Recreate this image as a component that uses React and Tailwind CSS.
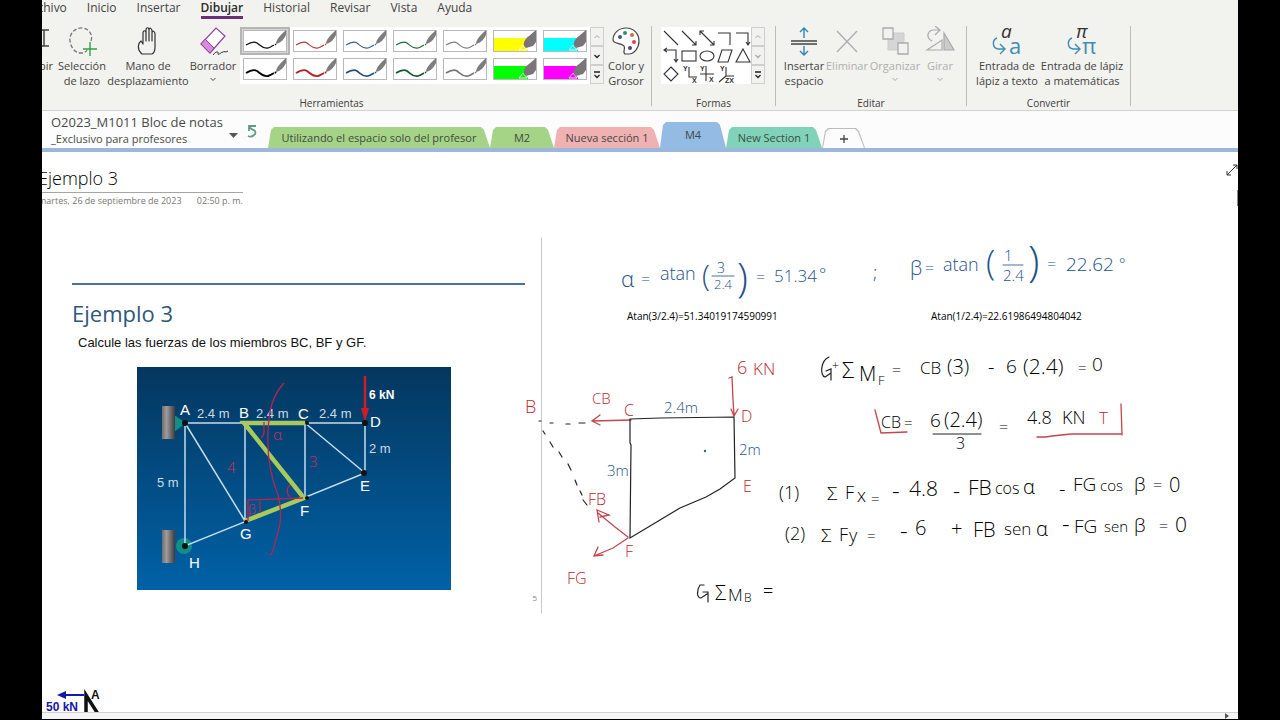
import React from "react";

const menu = ["Archivo", "Inicio", "Insertar", "Dibujar", "Historial", "Revisar", "Vista", "Ayuda"];

const penRows = [
  [
    { c: "#111111", w: 1.3, on: true },
    { c: "#b8343c", w: 1.1 },
    { c: "#3f5f86", w: 1.1 },
    { c: "#1d6b33", w: 1.1 },
    { c: "#7d7d7d", w: 1.1 },
    { c: "#ffff00", hl: true },
    { c: "#00ffff", hl: true },
  ],
  [
    { c: "#000000", w: 1.9 },
    { c: "#b81f28", w: 1.9 },
    { c: "#234f86", w: 1.6 },
    { c: "#0f5a2b", w: 1.6 },
    { c: "#777777", w: 1.6 },
    { c: "#00ff00", hl: true },
    { c: "#ff00ff", hl: true },
  ],
];

function Pen({ c, w, on, hl }) {
  return (
    <button
      aria-label={hl ? "Resaltador" : "Lápiz"}
      className={
        on
          ? "h-7 w-[50px] border-2 border-[#b5b5b5] bg-[#d6d6d6] p-px"
          : "h-7 w-[50px] p-[3px]"
      }
    >
      <svg viewBox="0 0 44 22" className="block h-[22px] w-11">
        <rect x="0.5" y="0.5" width="43" height="21" fill="#fff" stroke="#b9b9bd" />
        {hl ? (
          <>
            <path d="M1 8H34L31 15L35 20V21H1Z" fill={c} />
            <path d="M26 20L30 15L34 20Z" fill={c} stroke="#fff" strokeWidth="0.8" />
            <path d="M31 16C30 12 33 8 36 6L43 0V12L40 16L33 18Z" fill="#7b7579" />
          </>
        ) : (
          <>
            <path d="M3 15C8 12 11 11 14 13C18 16 20 19 25 18C28 17 29 16 31 15" fill="none" stroke={c} strokeWidth={w} />
            <path d="M32 15L33 14" stroke={c} strokeWidth={w} />
            <path d="M33 14C33 9 38 5 43 0V5C41 9 38 13 33 14Z" fill="#7d7d7d" />
          </>
        )}
      </svg>
    </button>
  );
}

function GalleryNav({ dim }) {
  const cell = "flex h-[19px] w-3.5 items-center justify-center border border-[#cfcfcd]";
  return (
    <div className="flex flex-col">
      <button aria-label="Fila anterior" className={cell}>
        <svg viewBox="0 0 8 8" className="size-2"><path d="M1.500 5L4 2.500L6.500 5" fill="none" stroke="#aaa" /></svg>
      </button>
      <button aria-label="Fila siguiente" className={cell}>
        <svg viewBox="0 0 8 8" className="size-2"><path d="M1.500 3L4 5.500L6.500 3" fill="none" stroke={dim ? "#aaa" : "#222"} strokeWidth="1.300" /></svg>
      </button>
      <button aria-label="Más" className={cell}>
        <svg viewBox="0 0 8 8" className="size-2"><path d="M1 1H7M1.500 4L4 6.500L6.500 4" fill="none" stroke="#222" strokeWidth="1.300" /></svg>
      </button>
    </div>
  );
}

function Tool({ lines, width, chevron, disabled, children }) {
  return (
    <button
      disabled={disabled}
      className={`${width} flex shrink-0 flex-col items-center whitespace-nowrap text-[11px] leading-[15px] ${disabled ? "text-[#b0afad]" : "text-[#444341]"}`}
    >
      <svg viewBox="0 0 32 32" className="size-8" fill="none">{children}</svg>
      {lines.map((l) => (
        <span key={l}>{l}</span>
      ))}
      {chevron && (
        <svg viewBox="0 0 8 8" className="mt-0.5 size-2" fill="none">
          <path d="M1.500 3L4 5.500L6.500 3" stroke={disabled ? "#aaa" : "#444"} />
        </svg>
      )}
    </button>
  );
}

function Group({ label, width, children }) {
  return (
    <section className={`${width} flex h-20 shrink-0 flex-col border-r border-[#bdbcba]`}>
      <div className="flex h-[70px] shrink-0 items-start">{children}</div>
      <h2 className="text-center text-[10px] leading-[14px] text-[#3d3c3a]">{label}</h2>
    </section>
  );
}

function Shapes() {
  return (
    <svg viewBox="0 0 90 57" className="h-[57px] w-[90px] bg-white" fill="none" stroke="#333" strokeWidth="1.1">
      <path d="M3 4L17 18" />
      <path d="M21 4L35 18M35 14V18H31" />
      <path d="M39 4L53 18M53 14V18H49M39 8V4H43" />
      <path d="M57 6H69V18" />
      <path d="M75 6H87V18M85 15L87 18L89 15" />
      <path d="M3 23H15V35M6 21L3 23L6 25M13 32L15 35L17 32" />
      <rect x="21" y="24" width="14" height="10" />
      <ellipse cx="46" cy="29" rx="7" ry="5" />
      <path d="M61 23H71L67 35H57Z" />
      <path d="M82 22L89 35H75Z" />
      <path d="M10 40L17 47L10 54L3 47Z" />
      <path d="M28 40V50H36M45 39V54M39 47H53M65 40V49H73M65 49L58 55" />
      <g fill="#333" stroke="none" fontFamily="Liberation Sans, sans-serif" fontSize="7" fontWeight="700">
        <text x="22" y="44">Y</text>
        <text x="31" y="56">X</text>
        <text x="39" y="44">Y</text>
        <text x="48" y="55">X</text>
        <text x="59" y="44">Y</text>
        <text x="64" y="56">ZX</text>
      </g>
    </svg>
  );
}

function Ribbon() {
  return (
    <header className="overflow-hidden border-b border-[#d4d3d1] bg-[#f2f2ef]">
      <nav className="-ml-[17px] flex h-5 gap-5 text-[12px] leading-4 text-[#444341]">
        {menu.map((m) => (
          <a
            key={m}
            href="#"
            className={m === "Dibujar" ? "h-[19px] border-b-[3px] border-[#6a2f74] font-semibold text-[#2b2b2b]" : ""}
          >
            {m}
          </a>
        ))}
      </nav>
      <div className="-ml-[30px] flex pb-1 pt-1.5">
        <Group label="Herramientas" width="w-[640px]">
          <Tool lines={["Escribir"]} width="w-11">
            <path d="M21 4H31M21 20H31M26 4V20" stroke="#444" strokeWidth="1.500" />
          </Tool>
          <Tool lines={["Selección", "de lazo"]} width="w-[52px]">
            <path d="M25 15C27 10 24 3 17 2C9 1 3 8 4 15C5 22 9 27 15 27C18 27 20 26 21 24" stroke="#777" strokeWidth="1.300" strokeDasharray="4 2" />
            <path d="M24 16V30M17 23H31" stroke="#35a04a" strokeWidth="1.400" />
          </Tool>
          <Tool lines={["Mano de", "desplazamiento"]} width="w-20">
            <path d="M9 27C5 23 6 17 9 15L11 18V7C11 4 14 4 14 7V15V4C14 1 17 1 17 4V15V4C17 1 20 2 20 5V15V7C20 4 23 5 23 8V21C23 24 22 27 20 28H10Z" stroke="#333" strokeWidth="1.200" strokeLinejoin="round" />
          </Tool>
          <Tool lines={["Borrador"]} width="w-[50px]" chevron>
            <path d="M4 18L19 2L28 10L13 27Z" fill="#fff" stroke="#9143a0" strokeWidth="1.200" />
            <path d="M4 18L8 13L17 22L13 27Z" fill="#d68bdc" stroke="#9143a0" />
            <path d="M16 29C19 25 22 25 21 28C21 30 26 24 29 26L31 25" stroke="#333" />
          </Tool>
          <div className="ml-0.5 flex pt-px">
            <div className="bg-white">
              {penRows.map((row, i) => (
                <div key={i} className="flex">
                  {row.map((p) => (
                    <Pen key={p.c} {...p} />
                  ))}
                </div>
              ))}
            </div>
            <GalleryNav />
          </div>
          <Tool lines={["Color y", "Grosor"]} width="w-11">
            <path d="M15 28C12 26 16 23 14 20C12 17 3 18 3 14C3 7 9 2 16 2C24 2 29 8 29 15C29 22 24 28 19 28Z" fill="#fff" stroke="#444" strokeWidth="1.200" />
            <circle cx="10" cy="11" r="2" fill="#315e93" />
            <circle cx="15" cy="7" r="2" fill="#2b9370" />
            <circle cx="22" cy="9" r="2" fill="#d36b3e" />
            <circle cx="24" cy="16" r="2" fill="#d34455" />
            <circle cx="20" cy="22" r="2" fill="#5a3c70" />
          </Tool>
        </Group>
        <Group label="Formas" width="w-[124px]">
          <div className="ml-[9px] flex pt-px">
            <Shapes />
            <GalleryNav dim />
          </div>
        </Group>
        <Group label="Editar" width="w-[191px]">
          <div className="ml-1.5 flex">
            <Tool lines={["Insertar", "espacio"]} width="w-11">
              <path d="M3 15H29M3 18H29" stroke="#444" strokeWidth="1.300" />
              <path d="M16 12V2M12 6L16 2L20 6M16 20V29M12 25L16 29L20 25" stroke="#3186b0" strokeWidth="1.400" />
            </Tool>
            <Tool lines={["Eliminar"]} width="w-[42px]" disabled>
              <path d="M6 5L26 26M26 5L6 26" stroke="#b0afad" strokeWidth="1.400" />
            </Tool>
            <Tool lines={["Organizar"]} width="w-[54px]" chevron disabled>
              <path d="M9 7H25V24H9Z" fill="#d5d5d5" stroke="#ccc" />
              <path d="M4 2H14V13H4ZM19 17H29V28H19Z" fill="#f2f2ef" stroke="#aaa" strokeWidth="1.300" />
            </Tool>
            <Tool lines={["Girar"]} width="w-9" chevron disabled>
              <path d="M3 24L18 14V24Z" stroke="#aaa" strokeWidth="1.200" />
              <path d="M20 7L30 24H20Z" fill="#ccc" stroke="#aaa" strokeWidth="1.200" />
              <path d="M8 15C1 11 4 4 10 4H15M11 0L16 4L11 9" stroke="#aaa" strokeWidth="1.200" />
            </Tool>
          </div>
        </Group>
        <Group label="Convertir" width="w-[164px]">
          <div className="ml-[7px] flex">
            <Tool lines={["Entrada de", "lápiz a texto"]} width="w-[66px]">
              <text x="10" y="12" fill="#333" fontSize="19" fontStyle="italic" fontFamily="Open Sans, sans-serif">a</text>
              <text x="18" y="28" fill="#3f8db3" fontSize="22" fontFamily="Open Sans, sans-serif">a</text>
              <path d="M6 12C1 14 1 22 7 23H13M9 18L14 23L9 28" stroke="#3f8db3" strokeWidth="1.400" />
            </Tool>
            <Tool lines={["Entrada de lápiz", "a matemáticas"]} width="w-[84px]">
              <text x="10" y="12" fill="#333" fontSize="19" fontStyle="italic" fontFamily="Open Sans, sans-serif">π</text>
              <text x="16" y="28" fill="#3f8db3" fontSize="22" fontFamily="Open Sans, sans-serif">π</text>
              <path d="M6 12C1 14 1 22 7 23H13M9 18L14 23L9 28" stroke="#3f8db3" strokeWidth="1.400" />
            </Tool>
          </div>
        </Group>
      </div>
    </header>
  );
}

const tabClip =
  "[clip-path:polygon(0_100%,3px_3px,6px_0,calc(100%-9px)_0,calc(100%-6px)_3px,100%_100%)]";

const tabs = [
  ["Utilizando el espacio solo del profesor", "w-[222px] h-[21px] bg-[#a6d487]"],
  ["M2", "w-16 h-[21px] bg-[#a6d487]"],
  ["Nueva sección 1", "w-[106px] h-[21px] bg-[#efb1b1]"],
  ["M4", "w-[66px] h-[26px] bg-[#94bbe4]"],
  ["New Section 1", "w-24 h-[21px] bg-[#80d3b8]"],
];

function NotebookBar() {
  return (
    <div className="flex h-[41px] items-end overflow-hidden whitespace-nowrap border-b-4 border-[#9bb8dc] bg-[#fcfcfc]">
      <button className="flex h-full w-[200px] shrink-0 items-end pl-[9px] text-left text-[#4a4a4a]">
        <span className="flex w-[178px] flex-col pb-0.5">
          <span className="text-[13px] leading-[17px]">O2023_M1011 Bloc de notas</span>
          <span className="text-[11px] leading-[15px]">_Exclusivo para profesores</span>
        </span>
        <svg viewBox="0 0 9 5" className="mb-2.5 h-[5px] w-[9px] shrink-0"><path d="M0 0H9L4.500 5Z" fill="#555" /></svg>
      </button>
      <button aria-label="Sincronizar" className="mb-2.5 w-[26px] shrink-0 pl-1">
        <svg viewBox="0 0 12 14" className="h-3.5 w-3" fill="none" stroke="#5f9c84" strokeWidth="1.800">
          <path d="M10 2H3V7M3 3L7 6C10 6 10 10 8 11C6 13 4 13 2 12" />
        </svg>
      </button>
      <div role="tablist" className="flex items-end text-[11px] text-[#3f4a44]">
        {tabs.map(([t, cls]) => (
          <button key={t} role="tab" aria-selected={t === "M4"} className={`${cls} ${tabClip} shrink-0 px-1 text-center leading-5`}>
            {t}
          </button>
        ))}
        <button aria-label="Crear sección" className={`${tabClip} h-[20px] w-[43px] bg-[#bdbdbd] px-px pt-px`}>
          <span className={`${tabClip} flex h-full items-center justify-center bg-[#fcfcfc]`}>
            <svg viewBox="0 0 8 8" className="size-2"><path d="M4 0V8M0 4H8" stroke="#444" strokeWidth="1.300" /></svg>
          </span>
        </button>
      </div>
    </div>
  );
}

function Truss() {
  return (
    <svg viewBox="137 367 314 223" className="h-[223px] w-[314px]" fill="none">
      <defs>
        <linearGradient id="sky" x2="0" y2="1">
          <stop offset="0" stopColor="#04375f" />
          <stop offset="1" stopColor="#0061a6" />
        </linearGradient>
        <linearGradient id="steel">
          <stop offset="0" stopColor="#6e6e6e" />
          <stop offset="0.35" stopColor="#a09c9c" />
          <stop offset="1" stopColor="#3d3a3c" />
        </linearGradient>
      </defs>
      <rect x="137" y="367" width="314" height="223" fill="url(#sky)" />
      <path d="M174 415L186 423L174 432Z" fill="#0f8f87" />
      <circle cx="184" cy="546" r="8" fill="#0f8f87" />
      <rect x="162" y="406" width="13" height="33" fill="url(#steel)" />
      <rect x="162" y="530" width="13" height="33" fill="url(#steel)" />
      <path d="M185 423H365V473L185 546V423L245 521V423M305 423V498M305 423L365 473" stroke="#c4dcec" strokeWidth="1.500" />
      <path d="M305 423H244L304 498L245 521" stroke="#a9c95c" strokeWidth="4.500" />
      <path d="M365 376V410" stroke="#d01c26" strokeWidth="2.500" />
      <path d="M361 408H369L365 422Z" fill="#d01c26" />
      <g fill="#111">
        <circle cx="185" cy="423" r="3" /><circle cx="365" cy="423" r="3" />
        <circle cx="364" cy="473" r="3" /><circle cx="185" cy="546" r="3" />
        <circle cx="307" cy="423" r="2" /><circle cx="307" cy="498" r="2" /><circle cx="246" cy="522" r="2" />
      </g>
      <g fontFamily="Liberation Sans, sans-serif" fontSize="15" fill="#fff">
        <text x="180" y="415">A</text><text x="239" y="418">B</text><text x="298" y="419">C</text>
        <text x="370" y="427">D</text><text x="360" y="491">E</text><text x="300" y="516">F</text>
        <text x="240" y="539">G</text><text x="189" y="568">H</text>
      </g>
      <g fontFamily="Liberation Sans, sans-serif" fontSize="13" fill="#c8dbe8">
        <text x="197" y="418">2.4 m</text><text x="256" y="418">2.4 m</text><text x="319" y="418">2.4 m</text>
        <text x="369" y="453">2 m</text><text x="157" y="487">5 m</text>
        <text x="369" y="399" fontSize="12" fontWeight="700" fill="#fff">6 kN</text>
      </g>
      <g stroke="#b5264f" strokeWidth="1.300">
        <path d="M284 383C272 396 269 410 268 432C267 455 271 478 278 495C283 515 280 528 275 542C274 550 272 553 270 556" />
        <path d="M248 521V500L303 498M264 422V432C264 436 262 437 261 438M260 501V513M290 485C286 488 287 495 290 497" />
      </g>
      <g fontFamily="Open Sans, sans-serif" fontSize="15" fontWeight="300" fill="#d02a58">
        <text x="273" y="440">α</text><text x="227" y="473">4</text><text x="309" y="467">3</text><text x="248" y="514" fontSize="13">β</text>
      </g>
    </svg>
  );
}

const blue = [
  ["α", 621, 287, 22], ["=", 641, 285, 16], ["atan", 660, 280, 18], ["(", 702, 286, 29], ["3", 717, 273, 14], ["2.4", 714, 289, 13],
  [")", 737, 292, 40], ["=", 756, 283, 16], ["51.34", 774, 282, 17], ["°", 819, 280, 17], [";", 873, 279, 18],
  ["β", 910, 275, 20], ["=", 925, 274, 16], ["atan", 943, 271, 18], ["(", 986, 275, 34], ["1", 1004, 261, 15], ["2.4", 1003, 281, 15],
  [")", 1028, 276, 42], ["=", 1047, 270, 16], ["22.62", 1066, 271, 19], ["°", 1119, 269, 15],
  ["2.4m", 664, 413, 15], ["2m", 739, 455, 15], ["3m", 607, 476, 15],
];

const red = [
  ["B", 525, 413, 18], ["CB", 592, 404, 15], ["C", 624, 416, 16], ["D", 741, 422, 16], ["6", 737, 374, 18], ["KN", 753, 375, 17],
  ["E", 743, 492, 16], ["FB", 588, 505, 16], ["F", 625, 557, 16], ["FG", 567, 584, 16], ["T", 1099, 424, 17],
];

const black = [
  ["+", 832, 370, 12], ["Σ", 842, 378, 22], ["M", 859, 381, 20], ["F", 878, 385, 13], ["=", 892, 376, 16], ["CB", 920, 374, 17],
  ["(3)", 947, 374, 20], ["-", 988, 374, 20], ["6", 1006, 373, 19], ["(2.4)", 1023, 374, 21], ["=", 1078, 373, 15], ["0", 1092, 371, 19],
  ["CB", 881, 428, 16], ["=", 904, 428, 15], ["6", 930, 427, 19], ["(2.4)", 944, 427, 20], ["3", 956, 449, 16], ["=", 999, 433, 16],
  ["4.8", 1027, 424, 18], ["KN", 1062, 424, 18],
  ["(1)", 779, 499, 18], ["Σ", 827, 500, 19], ["F", 845, 499, 18], ["x", 857, 502, 18], ["=", 871, 504, 15], ["-", 892, 499, 24],
  ["4.8", 909, 496, 21], ["-", 953, 499, 22], ["FB", 968, 495, 21], ["cos", 995, 494, 16], ["α", 1023, 494, 20], ["-", 1059, 496, 20],
  ["FG", 1073, 491, 19], ["cos", 1100, 491, 15], ["β", 1134, 491, 19], ["=", 1153, 491, 16], ["0", 1169, 492, 20],
  ["(2)", 785, 540, 18], ["Σ", 821, 542, 19], ["F", 839, 541, 18], ["y", 849, 542, 18], ["=", 867, 541, 15], ["-", 900, 539, 24],
  ["6", 915, 535, 20], ["+", 951, 536, 20], ["FB", 973, 537, 20], ["sen", 1004, 535, 17], ["α", 1036, 536, 20], ["-", 1062, 532, 24],
  ["FG", 1074, 533, 19], ["sen", 1104, 532, 15], ["β", 1134, 532, 19], ["=", 1159, 532, 16], ["0", 1175, 532, 21],
  ["Σ", 715, 600, 20], ["M", 728, 601, 17], ["B", 744, 602, 12], ["=", 763, 597, 18],
];

function Words({ items, color }) {
  return (
    <g fill={color} stroke="none" fontFamily="Open Sans, Noto Sans, sans-serif" fontWeight="300">
      {items.map(([t, x, y, s]) => (
        <text key={`${t}-${x}-${y}`} x={x} y={y} fontSize={s}>{t}</text>
      ))}
    </g>
  );
}

function Ink() {
  return (
    <svg viewBox="42 152 1196 560" className="pointer-events-none absolute left-0 top-0 h-[560px] w-[1196px] max-w-none" fill="none" strokeLinecap="round">
      <path d="M541.5 238V613" stroke="#c9c9c9" />
      <Words items={blue} color="#1f5289" />
      <path d="M712 276H734M1003 265H1023" stroke="#4a6f9c" />
      <Words items={red} color="#b92a33" />
      <g stroke="#c5454d" strokeWidth="1.300">
        <path d="M631 420L592 421M600 415L592 421L600 425" />
        <path d="M729 378L732 377L733 400L734 415M731 409L734 416L738 409" />
        <path d="M628 537L615 527L598 513M599 522L597 510L609 515L600 517" />
        <path d="M628 538L613 548L594 556M598 547L594 556L603 555" />
        <path d="M875 410L881 433L907 432M1037 437H1046L1052 436L1071 434H1122M1121 404L1122 435" />
      </g>
      <Words items={black} color="#000" />
      <g stroke="#222" strokeWidth="1.200">
        <path d="M630 419L660 418L734 417L735 478L720 489L706 497L680 508L650 526L630 538L631 445L630 443Z" />
        <path d="M539 421H541M550 423H553M566 424H570M579 423H585M543 431L545 434M550 442L553 447M559 452L562 457M568 464L571 470M575 480L577 485M580 491L582 495M583 500L587 505" />
        <path d="M933 434H981" />
        <path d="M829 357C820 361 820 376 825 377L831 373M826 371L831 369V380" />
        <path d="M704 585H700C696 591 697 598 701 598L707 594M703 592H708V602" />
      </g>
      <circle cx="705" cy="451" r="1.200" fill="#3a5f80" />
      <path d="M84 695H64" stroke="#1616a8" strokeWidth="2" strokeLinecap="butt" />
      <path d="M57 695L66 691V699Z" fill="#1616a8" />
      <path d="M86 714V695L98 714" stroke="#111" strokeWidth="3.500" />
      <g fontFamily="Liberation Sans, sans-serif" fontWeight="700">
        <text x="46" y="711" fontSize="12" fill="#1616a8">50 kN</text>
        <text x="91" y="699" fontSize="12" fill="#111">A</text>
      </g>
    </svg>
  );
}

export default function App() {
  return (
    <div className="flex min-h-screen flex-col bg-black px-[42px] pb-px font-['Open_Sans','Noto_Sans',sans-serif]">
      <Ribbon />
      <NotebookBar />
      <main className="relative min-h-[560px] flex-1 overflow-hidden bg-white">
        <div className="-ml-1 w-[205px] border-b border-[#a5a5a5] pt-3.5">
          <h1 className="pb-px text-[18px] font-light leading-[25px] text-black">Ejemplo 3</h1>
        </div>
        <p className="-ml-1 flex w-[205px] justify-between whitespace-nowrap pt-0.5 text-[9px] leading-3 text-[#777]">
          <span>martes, 26 de septiembre de 2023</span>
          <span>02:50 p. m.</span>
        </p>
        <section className="ml-[30px] mt-[76px] w-[453px] border-t-2 border-[#4b7199] pt-3">
          <h2 className="text-[22px] leading-8 text-[#2f5878]">Ejemplo 3</h2>
          <p className="pl-1.5 pt-1 font-['Liberation_Sans',sans-serif] text-[13px] leading-5 text-[#111]">
            Calcule las fuerzas de los miembros BC, BF y GF.
          </p>
          <figure className="ml-[65px] mt-3.5"><Truss /></figure>
          <p className="-mr-3 text-right text-[8px] leading-4 text-[#888]">5</p>
        </section>
        <p className="absolute left-[585px] top-[157px] text-[10px] leading-[14px] text-black">Atan(3/2.4)=51.34019174590991</p>
        <p className="absolute left-[889px] top-[157px] text-[10px] leading-[14px] text-black">Atan(1/2.4)=22.61986494804042</p>
        <Ink />
        <button aria-label="Vista de página completa" className="absolute right-0 top-3 size-3">
          <svg viewBox="0 0 12 12" className="size-3" fill="none" stroke="#333"><path d="M1 11L11 1M7 1H11V5M1 7V11H5" /></svg>
        </button>
        <div className="absolute right-0 top-[38px] h-4 w-px bg-[#888]" />
      </main>
      <div className="flex h-[7px] items-center justify-end border-t border-[#cfcfcf] bg-[#f5f5f5] pr-2">
        <svg viewBox="0 0 6 6" className="size-1.5"><path d="M1 0L5 3L1 6Z" fill="#555" /></svg>
      </div>
    </div>
  );
}
